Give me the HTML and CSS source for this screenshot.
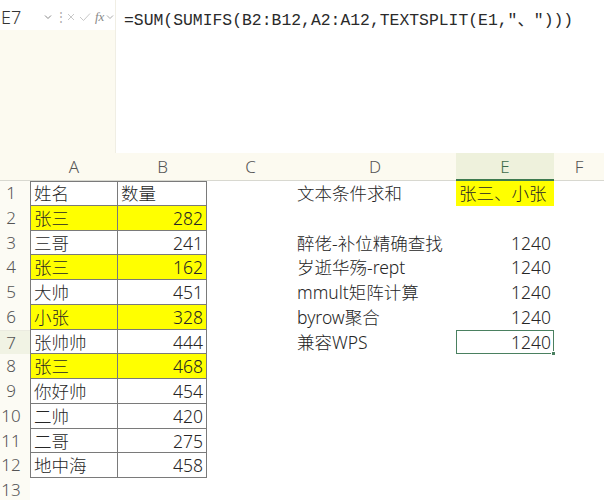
FILE: index.html
```html
<!DOCTYPE html>
<html lang="zh">
<head>
<meta charset="utf-8">
<link rel="stylesheet" href="styles.css">
</head>
<body>
<div class="fbar">
  <div class="left">
    <div class="namebox">
      <span class="ref">E7</span>
      <svg class="chev" width="8" height="6" viewBox="0 0 8 6"><path d="M1 1.5 L4 4.5 L7 1.5" fill="none" stroke="#888" stroke-width="1"/></svg>
      <span class="dots">⋮</span>
      <svg class="ico" width="10" height="10" viewBox="0 0 10 10"><path d="M2 2 L8 8 M8 2 L2 8" stroke="#c8c8c8" stroke-width="1"/></svg>
      <svg class="ico" width="12" height="10" viewBox="0 0 12 10"><path d="M1 5 L4.5 8.5 L11 1.5" fill="none" stroke="#c8c8c8" stroke-width="1"/></svg>
      <span class="fx">fx</span>
      <svg class="chev2" width="8" height="6" viewBox="0 0 8 6"><path d="M1 1.5 L4 4.5 L7 1.5" fill="none" stroke="#aaa" stroke-width="1"/></svg>
    </div>
  </div>
  <div class="formula">=SUM(SUMIFS(B2:B12,A2:A12,TEXTSPLIT(E1,"、")))</div>
</div>
<div class="sheet">
  <div class="corner"></div><div class="ch">A</div><div class="ch">B</div><div class="ch">C</div><div class="ch">D</div><div class="ch sel">E</div><div class="ch">F</div>

  <div class="rh">1</div><div class="c t a top">姓名</div><div class="c t b top">数量</div><div class="c"></div><div class="c">文本条件求和</div><div class="c y">张三、小张</div><div class="c"></div>
  <div class="rh">2</div><div class="c t a y">张三</div><div class="c t b y n">282</div><div class="c"></div><div class="c"></div><div class="c"></div><div class="c"></div>
  <div class="rh">3</div><div class="c t a">三哥</div><div class="c t b n">241</div><div class="c"></div><div class="c">醉佬-补位精确查找</div><div class="c n">1240</div><div class="c"></div>
  <div class="rh">4</div><div class="c t a y">张三</div><div class="c t b y n">162</div><div class="c"></div><div class="c">岁逝华殇-rept</div><div class="c n">1240</div><div class="c"></div>
  <div class="rh">5</div><div class="c t a">大帅</div><div class="c t b n">451</div><div class="c"></div><div class="c">mmult矩阵计算</div><div class="c n">1240</div><div class="c"></div>
  <div class="rh">6</div><div class="c t a y">小张</div><div class="c t b y n">328</div><div class="c"></div><div class="c">byrow聚合</div><div class="c n">1240</div><div class="c"></div>
  <div class="rh rsel">7</div><div class="c t a">张帅帅</div><div class="c t b n">444</div><div class="c"></div><div class="c">兼容WPS</div><div class="c n active">1240<span class="handle"></span></div><div class="c"></div>
  <div class="rh">8</div><div class="c t a y">张三</div><div class="c t b y n">468</div><div class="c"></div><div class="c"></div><div class="c"></div><div class="c"></div>
  <div class="rh">9</div><div class="c t a">你好帅</div><div class="c t b n">454</div><div class="c"></div><div class="c"></div><div class="c"></div><div class="c"></div>
  <div class="rh">10</div><div class="c t a">二帅</div><div class="c t b n">420</div><div class="c"></div><div class="c"></div><div class="c"></div><div class="c"></div>
  <div class="rh">11</div><div class="c t a">二哥</div><div class="c t b n">275</div><div class="c"></div><div class="c"></div><div class="c"></div><div class="c"></div>
  <div class="rh">12</div><div class="c t a">地中海</div><div class="c t b n">458</div><div class="c"></div><div class="c"></div><div class="c"></div><div class="c"></div>
  <div class="rh">13</div><div class="c"></div><div class="c"></div><div class="c"></div><div class="c"></div><div class="c"></div><div class="c"></div>
</div>
</body>
</html>
```

FILE: styles.css
```css
* { box-sizing: border-box; }
html, body { margin: 0; padding: 0; background: #ffffff; }
body {
  width: 604px;
  height: 500px;
  overflow: hidden;
  font-family: "Noto Sans", "Noto Sans CJK SC", sans-serif;
  font-weight: 300;
  color: #262626;
}
.fbar {
  display: flex;
  height: 153px;
  background: #ffffff;
}
.left {
  width: 116px;
  background: #fcfaf0;
  border-right: 1px solid #f0eee4;
}
.namebox {
  height: 30px;
  background: #ffffff;
  display: flex;
  align-items: center;
}
.ref {
  font-size: 18px;
  color: #333;
  width: 44px;
  padding-left: 1px;
  padding-top: 3px;
  line-height: 1;
}
.chev { margin-top: 3px; }
.dots { color: #aaa; font-size: 12px; margin-left: 3px; width: 8px; padding-top: 3px; }
.ico { margin-left: 3px; margin-top: 3px; }
.fx {
  font-family: "Liberation Serif", serif;
  font-style: italic;
  font-size: 13px;
  color: #888;
  margin-left: 4px;
  padding-top: 3px;
}
.chev2 { margin-left: 2px; margin-top: 3px; }
.formula {
  flex: 1;
  padding: 6px 0 0 8px;
  font-family: "Liberation Mono", "Noto Sans CJK SC", monospace;
  font-size: 16.4px;
  font-weight: 400;
  color: #2a2a2a;
  white-space: nowrap;
}
.sheet {
  display: grid;
  grid-template-columns: 30px 88px 89px 87px 162px 98px 1fr;
  grid-template-rows: 28px repeat(13, 24.75px);
  background: #ffffff;
}
.corner { background: #fcfaf0; border-bottom: 1px solid #d8d8d0; }
.ch {
  background: #fcfaf0;
  border-bottom: 1px solid #d8d8d0;
  color: #555;
  font-size: 17px;
  text-align: center;
  padding-top: 4px;
  line-height: 20px;
}
.ch.sel {
  background: #eef1dc;
  border-bottom: 2px solid #3d7a4f;
  color: #3d6a4a;
}
.rh {
  background: #fcfbf4;
  color: #555;
  font-size: 17px;
  text-align: center;
  padding-right: 8px;
  line-height: 24px;
}
.rh.rsel { background: #f1f3e4; border-top: 1px solid #ebebe0; }
.c {
  font-size: 17.5px;
  line-height: 24px;
  padding: 0 3px;
  white-space: nowrap;
  position: relative;
}
.t { border-right: 1px solid #7a7a7a; border-bottom: 1px solid #7a7a7a; }
.t.a { border-left: 1px solid #7a7a7a; }
.t.top { border-top: 1px solid #7a7a7a; line-height: 23px; }
.y { background: #ffff00; }
.n { text-align: right; }
.active {
  border: 1.5px solid #4a8060;
  line-height: 22px;
  padding-right: 2px;
}
.handle {
  position: absolute;
  right: -3px;
  bottom: -3px;
  width: 5px;
  height: 5px;
  background: #4a8060;
  border: 1px solid #ffffff;
}
```
